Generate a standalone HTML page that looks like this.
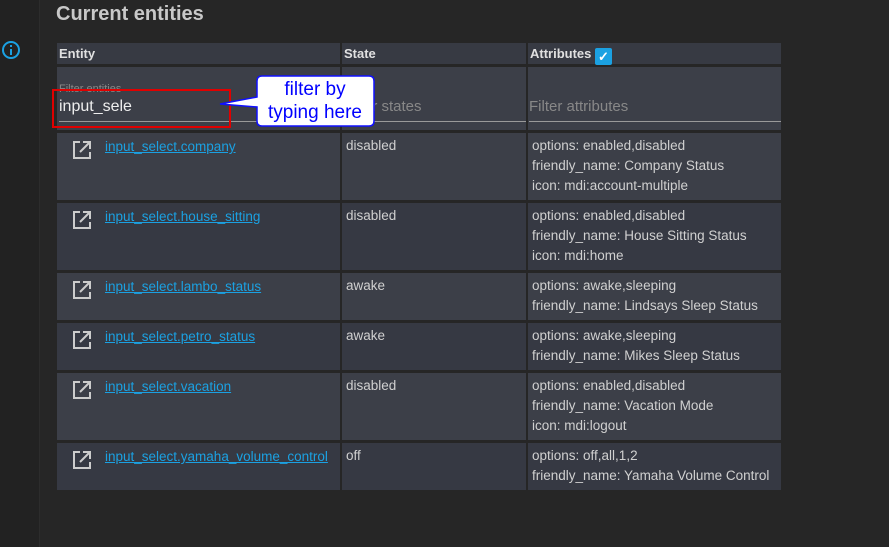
<!DOCTYPE html><html><head><meta charset="utf-8"><style>
body{margin:0;width:889px;height:547px;background:#262626;font-family:"Liberation Sans",Arial,sans-serif;position:relative;overflow:hidden}
.side{position:absolute;left:0;top:0;width:39px;height:547px;background:#222;border-right:1px solid #2c2c2c}
.c{position:absolute;box-sizing:border-box;color:#d0d0d0;font-size:13.5px;line-height:20px;white-space:nowrap}
.h{background:#373a43;font-weight:bold;font-size:13px;color:#e0e0e0;padding:1px 2px}
.a{background:#3c3f48}.b{background:#363943}
a{color:#1ba1e2;text-decoration:underline}
.ic{position:absolute;left:15px;top:7px}
.lk{position:absolute;left:48px;top:4px;font-size:13.5px}
</style></head><body>
<div class="side"></div>
<svg style="position:absolute;left:1px;top:40px" width="22" height="22" viewBox="0 0 22 22"><circle cx="10" cy="10" r="8" fill="none" stroke="#1ba1e2" stroke-width="2"/><rect x="9" y="9" width="2" height="6" fill="#1ba1e2"/><rect x="9" y="5" width="2" height="2" fill="#1ba1e2"/></svg>
<div style="position:absolute;left:56px;top:3px;font-size:20px;font-weight:bold;color:#c8c8c8">Current entities</div>
<div class="c h" style="left:57px;top:43px;width:283px;height:21px">Entity</div>
<div class="c h" style="left:342px;top:43px;width:184px;height:21px">State</div>
<div class="c h" style="left:528px;top:43px;width:253px;height:21px">Attributes <span style="display:inline-block;width:17px;height:17px;background:#1ba1e2;border-radius:2px;vertical-align:-3px;color:#fff;text-align:center;line-height:17px;font-size:13px">✓</span></div>
<div class="c a" style="left:57px;top:67px;width:283px;height:63px"><div style="position:absolute;left:2px;top:12px;font-size:11px;color:#888">Filter entities</div><div style="position:absolute;left:2px;top:30px;font-size:16px;color:#eee">input_sele</div><div style="position:absolute;left:2px;right:0;top:54px;border-top:1px solid #999"></div></div>
<div class="c a" style="left:342px;top:67px;width:184px;height:63px"><div style="position:absolute;left:2px;top:30px;font-size:15px;color:#888">Filter states</div><div style="position:absolute;left:0;right:0;top:54px;border-top:1px solid #999"></div></div>
<div class="c a" style="left:528px;top:67px;width:253px;height:63px"><div style="position:absolute;left:1px;top:30px;font-size:15px;color:#888">Filter attributes</div><div style="position:absolute;left:1px;right:0;top:54px;border-top:1px solid #999"></div></div>
<div style="position:absolute;left:52px;top:89px;width:175px;height:35px;border:2px solid #e00000"></div>
<svg style="position:absolute;left:215px;top:75px" width="160" height="55"><path d="M5 29 L42 22 L42 6 Q42 1 47 1 L154 1 Q159 1 159 6 L159 46 Q159 51 154 51 L47 51 Q42 51 42 46 L42 32 Z" fill="#fff" stroke="#1010ff" stroke-width="1.5"/></svg>
<div style="position:absolute;left:257px;top:78px;width:116px;text-align:center;color:#0000ff;font-size:19px;line-height:23px">filter by<br>typing here</div>

<div class="c a" style="left:57px;top:133px;width:283px;height:67px"><svg class="ic" width="20" height="20" viewBox="0 0 20 20"><path d="M8 2H2v16h16v-6M11 2h7v7M18 2L8 12" fill="none" stroke="#ccc" stroke-width="2"/></svg><a class="lk">input_select.company</a></div>
<div class="c a" style="left:342px;top:133px;width:184px;height:67px;padding:3px 4px">disabled</div>
<div class="c a" style="left:528px;top:133px;width:253px;height:67px;padding:3px 4px">options: enabled,disabled<br>friendly_name: Company Status<br>icon: mdi:account-multiple</div>

<div class="c b" style="left:57px;top:203px;width:283px;height:67px"><svg class="ic" width="20" height="20" viewBox="0 0 20 20"><path d="M8 2H2v16h16v-6M11 2h7v7M18 2L8 12" fill="none" stroke="#ccc" stroke-width="2"/></svg><a class="lk">input_select.house_sitting</a></div>
<div class="c b" style="left:342px;top:203px;width:184px;height:67px;padding:3px 4px">disabled</div>
<div class="c b" style="left:528px;top:203px;width:253px;height:67px;padding:3px 4px">options: enabled,disabled<br>friendly_name: House Sitting Status<br>icon: mdi:home</div>

<div class="c a" style="left:57px;top:273px;width:283px;height:47px"><svg class="ic" width="20" height="20" viewBox="0 0 20 20"><path d="M8 2H2v16h16v-6M11 2h7v7M18 2L8 12" fill="none" stroke="#ccc" stroke-width="2"/></svg><a class="lk">input_select.lambo_status</a></div>
<div class="c a" style="left:342px;top:273px;width:184px;height:47px;padding:3px 4px">awake</div>
<div class="c a" style="left:528px;top:273px;width:253px;height:47px;padding:3px 4px">options: awake,sleeping<br>friendly_name: Lindsays Sleep Status</div>

<div class="c b" style="left:57px;top:323px;width:283px;height:47px"><svg class="ic" width="20" height="20" viewBox="0 0 20 20"><path d="M8 2H2v16h16v-6M11 2h7v7M18 2L8 12" fill="none" stroke="#ccc" stroke-width="2"/></svg><a class="lk">input_select.petro_status</a></div>
<div class="c b" style="left:342px;top:323px;width:184px;height:47px;padding:3px 4px">awake</div>
<div class="c b" style="left:528px;top:323px;width:253px;height:47px;padding:3px 4px">options: awake,sleeping<br>friendly_name: Mikes Sleep Status</div>

<div class="c a" style="left:57px;top:373px;width:283px;height:67px"><svg class="ic" width="20" height="20" viewBox="0 0 20 20"><path d="M8 2H2v16h16v-6M11 2h7v7M18 2L8 12" fill="none" stroke="#ccc" stroke-width="2"/></svg><a class="lk">input_select.vacation</a></div>
<div class="c a" style="left:342px;top:373px;width:184px;height:67px;padding:3px 4px">disabled</div>
<div class="c a" style="left:528px;top:373px;width:253px;height:67px;padding:3px 4px">options: enabled,disabled<br>friendly_name: Vacation Mode<br>icon: mdi:logout</div>

<div class="c b" style="left:57px;top:443px;width:283px;height:47px"><svg class="ic" width="20" height="20" viewBox="0 0 20 20"><path d="M8 2H2v16h16v-6M11 2h7v7M18 2L8 12" fill="none" stroke="#ccc" stroke-width="2"/></svg><a class="lk">input_select.yamaha_volume_control</a></div>
<div class="c b" style="left:342px;top:443px;width:184px;height:47px;padding:3px 4px">off</div>
<div class="c b" style="left:528px;top:443px;width:253px;height:47px;padding:3px 4px;overflow:hidden">options: off,all,1,2<br>friendly_name: Yamaha Volume Control</div>
</body></html>
